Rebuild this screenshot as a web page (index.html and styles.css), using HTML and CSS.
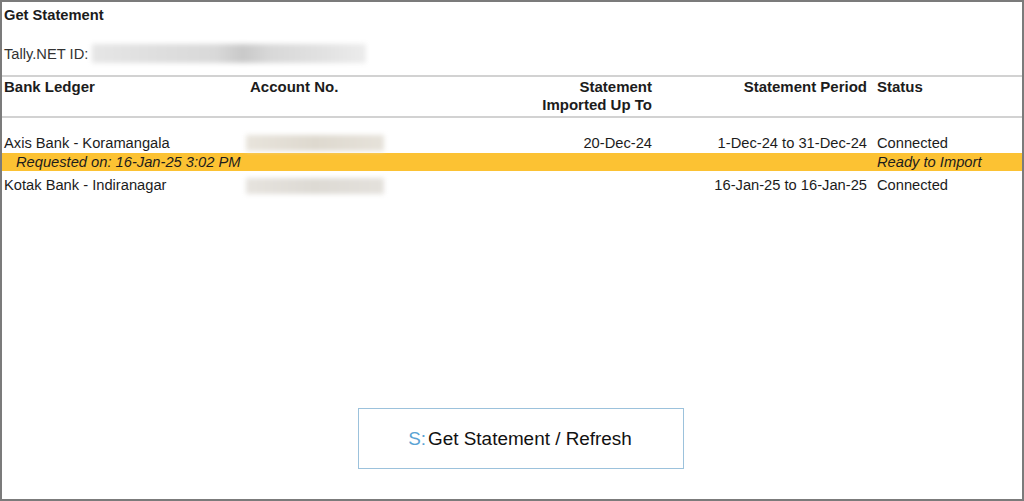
FILE: index.html
```html
<!DOCTYPE html>
<html>
<head>
<meta charset="utf-8">
<link rel="stylesheet" href="styles.css">
</head>
<body>
<div class="frame">
  <div class="title">Get Statement</div>
  <div class="idrow">
    <span class="idlabel">Tally.NET ID:</span>
    <span class="blur blur-id"></span>
  </div>
  <div class="grid head">
    <div class="c1">Bank Ledger</div>
    <div class="c2">Account No.</div>
    <div class="c3">Statement<br>Imported Up To</div>
    <div class="c4">Statement Period</div>
    <div class="c5">Status</div>
  </div>
  <div class="grid row row-first">
    <div class="c1">Axis Bank - Koramangala</div>
    <div class="c2"><span class="blur blur-acc blur-acc1"></span></div>
    <div class="c3">20-Dec-24</div>
    <div class="c4">1-Dec-24 to 31-Dec-24</div>
    <div class="c5">Connected</div>
  </div>
  <div class="grid band">
    <div class="req">Requested on: 16-Jan-25 3:02 PM</div>
    <div class="c5">Ready to Import</div>
  </div>
  <div class="grid row row-second">
    <div class="c1">Kotak Bank - Indiranagar</div>
    <div class="c2"><span class="blur blur-acc blur-acc2"></span></div>
    <div class="c3"></div>
    <div class="c4">16-Jan-25 to 16-Jan-25</div>
    <div class="c5">Connected</div>
  </div>
  <div class="footer">
    <div class="btn"><span class="key">S:</span>Get Statement / Refresh</div>
  </div>
</div>
</body>
</html>
```
FILE: styles.css
```css
html, body {
  margin: 0;
  padding: 0;
  background: #ffffff;
}
body {
  font-family: "Liberation Sans", Arial, sans-serif;
  color: #1c1c1c;
}
.frame {
  box-sizing: border-box;
  width: 1024px;
  height: 501px;
  border: 2px solid #7b7b7b;
  display: flex;
  flex-direction: column;
  overflow: hidden;
}
.title {
  font-weight: bold;
  font-size: 14.7px;
  line-height: 18px;
  padding: 4px 0 0 2px;
}
.idrow {
  display: flex;
  align-items: flex-start;
  height: 40px;
  margin-top: 11px;
  padding-left: 2px;
  font-size: 14.7px;
  border-bottom: 2px solid #d2d2d2;
}
.idlabel {
  line-height: 18px;
  margin-top: 10px;
  color: #333;
}
.blur {
  display: block;
  filter: blur(2.5px);
}
.blur-id {
  width: 274px;
  height: 19px;
  margin-left: 4px;
  margin-top: 9px;
  background: linear-gradient(90deg, #e6e6e6 0%, #dedede 25%, #d9d9d9 45%, #c9c9c9 55%, #d8d8d8 65%, #e2e2e2 85%, #ececec 100%);
}
.grid {
  display: grid;
  grid-template-columns: 246px 230px 172px 215px 1fr;
  padding: 0 2px;
  font-size: 14.7px;
  line-height: 18px;
}
.c3, .c4 { text-align: right; }
.c5 { padding-left: 10px; }
.head {
  font-weight: bold;
  font-size: 15px;
  padding-top: 1px;
  padding-bottom: 2px;
  border-bottom: 2px solid #d2d2d2;
}
.row-first { margin-top: 16px; }
.row-second { margin-top: 5px; }
.band {
  background: #fcc233;
  font-style: italic;
  margin-top: 1px;
}
.req {
  grid-column: 1 / 5;
  padding-left: 12px;
}
.blur-acc {
  width: 138px;
  height: 16px;
  margin-left: -4px;
}
.blur-acc1 {
  margin-top: 1px;
  background: linear-gradient(90deg, #e8e4dc, #ded9cf 50%, #e6e2da);
}
.blur-acc2 {
  margin-top: 2px;
  background: linear-gradient(90deg, #e6e3de, #dddad4 50%, #e4e1dc);
}
.footer {
  margin-top: auto;
  margin-bottom: 30px;
  padding-left: 356px;
}
.btn {
  box-sizing: border-box;
  width: 326px;
  height: 61px;
  border: 1px solid #9cc2dc;
  display: flex;
  align-items: center;
  justify-content: center;
  font-size: 18.9px;
  color: #111;
  padding-right: 2px;
}
.key {
  color: #5aa3d4;
  margin-right: 2px;
}
```
